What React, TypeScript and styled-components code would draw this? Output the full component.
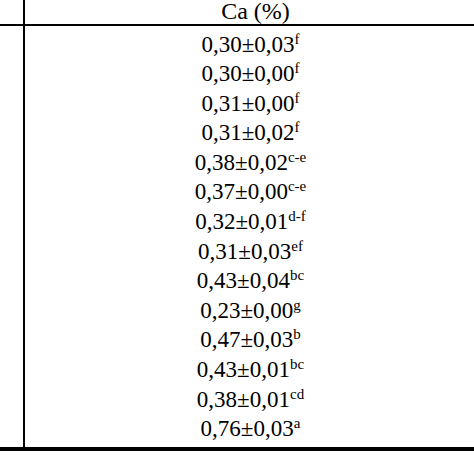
import styled, { createGlobalStyle } from "styled-components";

const GlobalStyle = createGlobalStyle`
  html, body {
    margin: 0;
    padding: 0;
    background: #ffffff;
  }
  * {
    box-sizing: border-box;
  }
`

const SERIF = `"Liberation Serif", Tinos, "Times New Roman", serif`

const ROWS: [string, string][] = [
  ["0,30±0,03", "f"],
  ["0,30±0,00", "f"],
  ["0,31±0,00", "f"],
  ["0,31±0,02", "f"],
  ["0,38±0,02", "c-e"],
  ["0,37±0,00", "c-e"],
  ["0,32±0,01", "d-f"],
  ["0,31±0,03", "ef"],
  ["0,43±0,04", "bc"],
  ["0,23±0,00", "g"],
  ["0,47±0,03", "b"],
  ["0,43±0,01", "bc"],
  ["0,38±0,01", "cd"],
  ["0,76±0,03", "a"],
]

const Page = styled.div`
  width: 474px;
  height: 474px;
  font-family: ${ SERIF };
  color: #000;
`

const Table = styled.div`
  display: grid;
  grid-template-columns: 25px 1fr;
  grid-template-rows: 26px auto;
`

const Cell = styled.div<{ $head?: boolean; $stub?: boolean }>`
  border-bottom: ${ p => p.$head ? 2 : 4 }px solid #000;
  border-right: ${ p => p.$stub ? "2px solid #000" : "none" };
`

const HeadCell = styled(Cell)`
  font-size: 24px;
  line-height: 21px;
  text-align: center;
  padding: 1px 0 0 12px;
`

const BodyCell = styled(Cell)`
  padding: 3.5px 0 3px;
`

const Row = styled.div`
  font-size: 23px;
  line-height: 29.6px;
  height: 29.6px;
  text-align: center;
  padding-left: 2px;
`

const Sup = styled.span`
  font-size: 15px;
  line-height: 0;
  vertical-align: 8px;
`

export default function App() {
  return (
    <Page>
      <GlobalStyle/>
      <Table>
        <Cell $head $stub/>
        <HeadCell $head>Ca (%)</HeadCell>
        <Cell $stub/>
        <BodyCell>
          {
            ROWS.map(([value, letter], i) =>
              <Row key={ i }>{ value }<Sup>{ letter }</Sup></Row>
            )
          }
        </BodyCell>
      </Table>
    </Page>
  );
}
